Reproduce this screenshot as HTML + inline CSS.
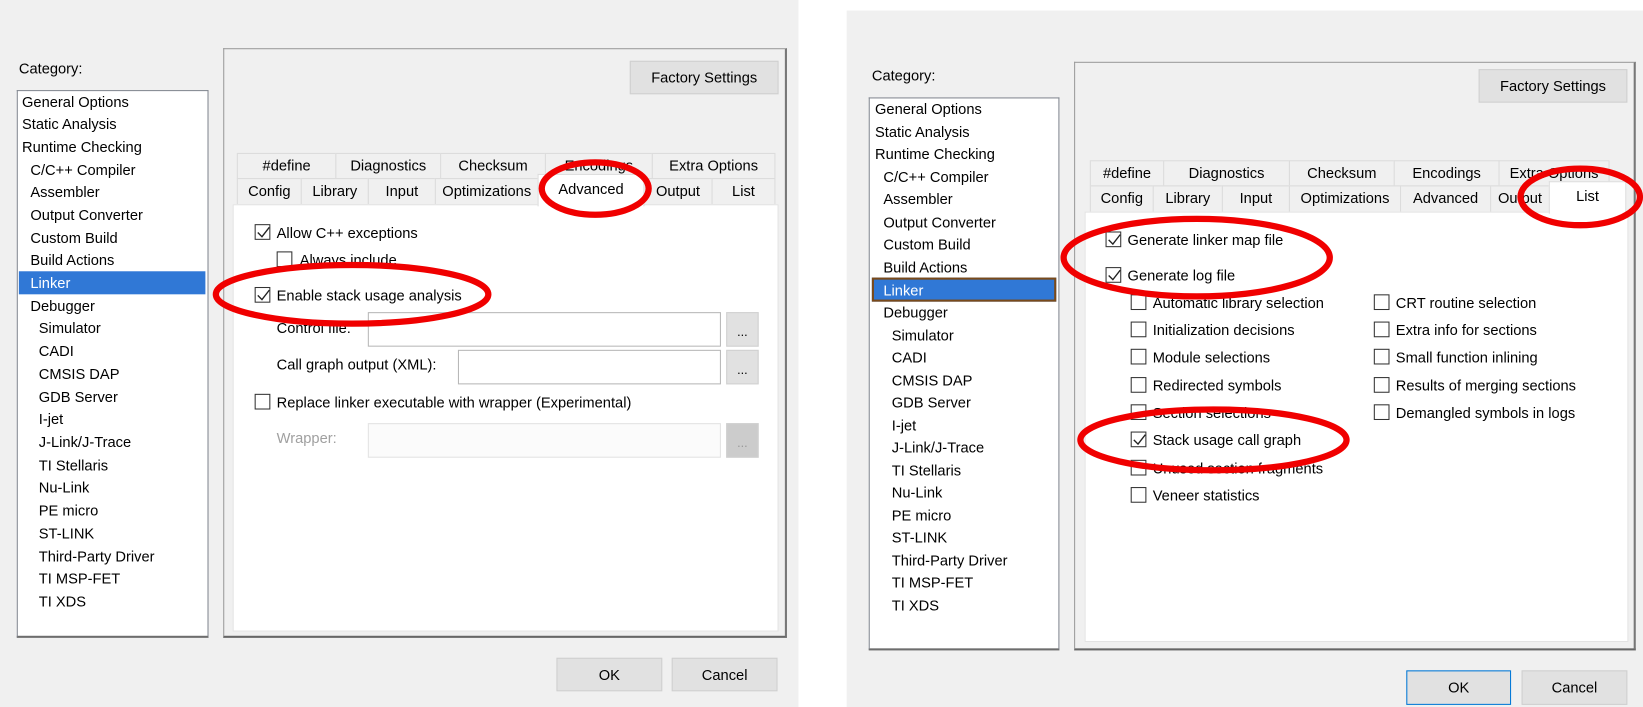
<!DOCTYPE html>
<html><head><meta charset="utf-8"><style>
html,body{margin:0;padding:0;background:#fff;width:1643px;height:707px;overflow:hidden}
#w{position:absolute;left:0;top:0;width:1568px;height:675px;transform:scale(1.0479,1.0474);transform-origin:0 0}
div{position:absolute;box-sizing:border-box}
.t{font:14px "Liberation Sans",sans-serif;color:#000;white-space:nowrap;line-height:16px}
.g{background:#f0f0f0}
.lb{background:#fff;border:1px solid #828790;border-bottom:2px solid #6d6d6d}
.grp{border:1px solid #9a9a9a;border-right:2px solid #777;border-bottom:2px solid #666;background:#f0f0f0}
.btn{background:#e1e1e1;border:1px solid #cfcfcf;font:14px "Liberation Sans",sans-serif;text-align:center}
.tab{border:1px solid #dcdcdc;background:#f0f0f0;font:14px "Liberation Sans",sans-serif;text-align:center;line-height:22px}
.sel{background:#fff;border:1px solid #dcdcdc;border-bottom:none;font:14px "Liberation Sans",sans-serif;text-align:center;line-height:26px}
.page{background:#fff;border:1px solid #e3e3e3}
.cb{width:15px;height:15px;border:1px solid #333;background:#fff}
.inp{background:#fff;border:1px solid #b7b7b7}
.dots{background:#e1e1e1;border:1px solid #d0d0d0;font:12px "Liberation Sans",sans-serif;text-align:center;line-height:36px}
.hl{background:#3078d6;color:#fff}
</style></head><body><div id="w">
<!-- LEFT -->
<div class="g" style="left:0;top:0;width:762px;height:675px"></div>
<div class="t" style="left:18px;top:57px">Category:</div>
<div class="lb" style="left:16px;top:86px;width:183px;height:523px"></div>
<div style="left:18px;top:259px;width:178px;height:22px;background:#3078d6"></div>
<div class="t" style="left:21px;top:89px">General Options</div>
<div class="t" style="left:21px;top:110px">Static Analysis</div>
<div class="t" style="left:21px;top:132px">Runtime Checking</div>
<div class="t" style="left:29px;top:154px">C/C++ Compiler</div>
<div class="t" style="left:29px;top:175px">Assembler</div>
<div class="t" style="left:29px;top:197px">Output Converter</div>
<div class="t" style="left:29px;top:219px">Custom Build</div>
<div class="t" style="left:29px;top:240px">Build Actions</div>
<div class="t" style="left:29px;top:262px;color:#fff">Linker</div>
<div class="t" style="left:29px;top:284px">Debugger</div>
<div class="t" style="left:37px;top:305px">Simulator</div>
<div class="t" style="left:37px;top:327px">CADI</div>
<div class="t" style="left:37px;top:349px">CMSIS DAP</div>
<div class="t" style="left:37px;top:371px">GDB Server</div>
<div class="t" style="left:37px;top:392px">I-jet</div>
<div class="t" style="left:37px;top:414px">J-Link/J-Trace</div>
<div class="t" style="left:37px;top:436px">TI Stellaris</div>
<div class="t" style="left:37px;top:457px">Nu-Link</div>
<div class="t" style="left:37px;top:479px">PE micro</div>
<div class="t" style="left:37px;top:501px">ST-LINK</div>
<div class="t" style="left:37px;top:523px">Third-Party Driver</div>
<div class="t" style="left:37px;top:544px">TI MSP-FET</div>
<div class="t" style="left:37px;top:566px">TI XDS</div>

<div class="grp" style="left:213px;top:46px;width:538px;height:563px"></div>
<div class="btn" style="left:601px;top:58px;width:142px;height:32px;line-height:30px">Factory Settings</div>
<div class="tab" style="left:226px;top:146px;width:95px;height:25px">#define</div>
<div class="tab" style="left:320px;top:146px;width:101px;height:25px">Diagnostics</div>
<div class="tab" style="left:420px;top:146px;width:101px;height:25px">Checksum</div>
<div class="tab" style="left:520px;top:146px;width:103px;height:25px">Encodings</div>
<div class="tab" style="left:622px;top:146px;width:118px;height:25px">Extra Options</div>
<div class="tab" style="left:226px;top:170px;width:62px;height:26px">Config</div>
<div class="tab" style="left:287px;top:170px;width:65px;height:26px">Library</div>
<div class="tab" style="left:351px;top:170px;width:65px;height:26px">Input</div>
<div class="tab" style="left:415px;top:170px;width:99px;height:26px">Optimizations</div>
<div class="tab" style="left:614px;top:170px;width:66px;height:26px">Output</div>
<div class="tab" style="left:679px;top:170px;width:61px;height:26px">List</div>
<div class="page" style="left:222px;top:195px;width:521px;height:408px"></div>
<div class="sel" style="left:513px;top:166px;width:102px;height:31px">Advanced</div>

<div class="cb" style="left:243px;top:214px"></div>
<div class="t" style="left:264px;top:214px">Allow C++ exceptions</div>
<div class="cb" style="left:264px;top:240px"></div>
<div class="t" style="left:286px;top:240px">Always include</div>
<div class="cb" style="left:243px;top:274px"></div>
<div class="t" style="left:264px;top:274px">Enable stack usage analysis</div>
<div class="t" style="left:264px;top:305px">Control file:</div>
<div class="inp" style="left:351px;top:298px;width:337px;height:33px"></div>
<div class="dots" style="left:693px;top:298px;width:31px;height:33px">...</div>
<div class="t" style="left:264px;top:340px">Call graph output (XML):</div>
<div class="inp" style="left:437px;top:334px;width:251px;height:33px"></div>
<div class="dots" style="left:693px;top:334px;width:31px;height:33px">...</div>
<div class="cb" style="left:243px;top:376px"></div>
<div class="t" style="left:264px;top:376px">Replace linker executable with wrapper (Experimental)</div>
<div class="t" style="left:264px;top:410px;color:#a0a0a0">Wrapper:</div>
<div class="inp" style="left:351px;top:404px;width:337px;height:33px;border-color:#e3e3e3;background:#fbfbfb"></div>
<div class="dots" style="left:693px;top:404px;width:31px;height:33px;background:#ccc;color:#999">...</div>
<div class="btn" style="left:531px;top:628px;width:101px;height:32px;line-height:30px">OK</div>
<div class="btn" style="left:641px;top:628px;width:101px;height:32px;line-height:30px">Cancel</div>

<!-- RIGHT -->
<div class="g" style="left:808px;top:10px;width:760px;height:665px"></div>
<div class="t" style="left:832px;top:64px">Category:</div>
<div class="lb" style="left:829px;top:93px;width:182px;height:528px"></div>
<div style="left:832px;top:265px;width:176px;height:23px;background:#3078d6;border:2px solid #7a4a1a"></div>
<div class="t" style="left:835px;top:96px">General Options</div>
<div class="t" style="left:835px;top:118px">Static Analysis</div>
<div class="t" style="left:835px;top:139px">Runtime Checking</div>
<div class="t" style="left:843px;top:161px">C/C++ Compiler</div>
<div class="t" style="left:843px;top:182px">Assembler</div>
<div class="t" style="left:843px;top:204px">Output Converter</div>
<div class="t" style="left:843px;top:225px">Custom Build</div>
<div class="t" style="left:843px;top:247px">Build Actions</div>
<div class="t" style="left:843px;top:269px;color:#fff">Linker</div>
<div class="t" style="left:843px;top:290px">Debugger</div>
<div class="t" style="left:851px;top:312px">Simulator</div>
<div class="t" style="left:851px;top:333px">CADI</div>
<div class="t" style="left:851px;top:355px">CMSIS DAP</div>
<div class="t" style="left:851px;top:376px">GDB Server</div>
<div class="t" style="left:851px;top:398px">I-jet</div>
<div class="t" style="left:851px;top:419px">J-Link/J-Trace</div>
<div class="t" style="left:851px;top:441px">TI Stellaris</div>
<div class="t" style="left:851px;top:462px">Nu-Link</div>
<div class="t" style="left:851px;top:484px">PE micro</div>
<div class="t" style="left:851px;top:505px">ST-LINK</div>
<div class="t" style="left:851px;top:527px">Third-Party Driver</div>
<div class="t" style="left:851px;top:548px">TI MSP-FET</div>
<div class="t" style="left:851px;top:570px">TI XDS</div>

<div class="grp" style="left:1025px;top:59px;width:536px;height:562px"></div>
<div class="btn" style="left:1411px;top:66px;width:142px;height:32px;line-height:30px">Factory Settings</div>
<div class="tab" style="left:1040px;top:153px;width:71px;height:25px">#define</div>
<div class="tab" style="left:1110px;top:153px;width:121px;height:25px">Diagnostics</div>
<div class="tab" style="left:1230px;top:153px;width:101px;height:25px">Checksum</div>
<div class="tab" style="left:1330px;top:153px;width:101px;height:25px">Encodings</div>
<div class="tab" style="left:1430px;top:153px;width:106px;height:25px">Extra Options</div>
<div class="tab" style="left:1040px;top:177px;width:61px;height:26px">Config</div>
<div class="tab" style="left:1100px;top:177px;width:67px;height:26px">Library</div>
<div class="tab" style="left:1166px;top:177px;width:65px;height:26px">Input</div>
<div class="tab" style="left:1230px;top:177px;width:107px;height:26px">Optimizations</div>
<div class="tab" style="left:1336px;top:177px;width:87px;height:26px">Advanced</div>
<div class="tab" style="left:1422px;top:177px;width:57px;height:26px">Output</div>
<div class="page" style="left:1035px;top:202px;width:519px;height:411px"></div>
<div class="sel" style="left:1478px;top:173px;width:74px;height:31px">List</div>

<div class="cb" style="left:1055px;top:221px"></div>
<div class="t" style="left:1076px;top:221px">Generate linker map file</div>
<div class="cb" style="left:1055px;top:255px"></div>
<div class="t" style="left:1076px;top:255px">Generate log file</div>

<div class="cb" style="left:1079px;top:281px"></div><div class="t" style="left:1100px;top:281px">Automatic library selection</div>
<div class="cb" style="left:1079px;top:307px"></div><div class="t" style="left:1100px;top:307px">Initialization decisions</div>
<div class="cb" style="left:1079px;top:333px"></div><div class="t" style="left:1100px;top:333px">Module selections</div>
<div class="cb" style="left:1079px;top:360px"></div><div class="t" style="left:1100px;top:360px">Redirected symbols</div>
<div class="cb" style="left:1079px;top:386px"></div><div class="t" style="left:1100px;top:386px">Section selections</div>
<div class="cb" style="left:1079px;top:412px"></div><div class="t" style="left:1100px;top:412px">Stack usage call graph</div>
<div class="cb" style="left:1079px;top:439px"></div><div class="t" style="left:1100px;top:439px">Unused section fragments</div>
<div class="cb" style="left:1079px;top:465px"></div><div class="t" style="left:1100px;top:465px">Veneer statistics</div>
<div class="cb" style="left:1311px;top:281px"></div><div class="t" style="left:1332px;top:281px">CRT routine selection</div>
<div class="cb" style="left:1311px;top:307px"></div><div class="t" style="left:1332px;top:307px">Extra info for sections</div>
<div class="cb" style="left:1311px;top:333px"></div><div class="t" style="left:1332px;top:333px">Small function inlining</div>
<div class="cb" style="left:1311px;top:360px"></div><div class="t" style="left:1332px;top:360px">Results of merging sections</div>
<div class="cb" style="left:1311px;top:386px"></div><div class="t" style="left:1332px;top:386px">Demangled symbols in logs</div>

<div class="btn" style="left:1342px;top:640px;width:100px;height:33px;line-height:31px;border:1px solid #0078d7">OK</div>
<div class="btn" style="left:1452px;top:640px;width:101px;height:33px;line-height:31px">Cancel</div>

<!-- checkmarks + ellipses overlay -->
<svg style="position:absolute;left:0;top:0" width="1568" height="675" viewBox="0 0 1568 675">
<g fill="none" stroke="#222" stroke-width="1.3">
<path d="M246 222 l4 4 l7 -9"/>
<path d="M246 282 l4 4 l7 -9"/>
<path d="M1058 229 l4 4 l7 -9"/>
<path d="M1058 263 l4 4 l7 -9"/>
<path d="M1082 420 l4 4 l7 -9"/>
</g>
<g fill="none" stroke="#f00000" stroke-width="6">
<ellipse cx="568" cy="180" rx="51" ry="25"/>
<ellipse cx="336" cy="281" rx="130" ry="28"/>
<ellipse cx="1142" cy="246" rx="127" ry="37"/>
<ellipse cx="1508" cy="188" rx="57" ry="27"/>
<ellipse cx="1158" cy="420" rx="127" ry="29"/>
</g>
</svg>
</div></body></html>
